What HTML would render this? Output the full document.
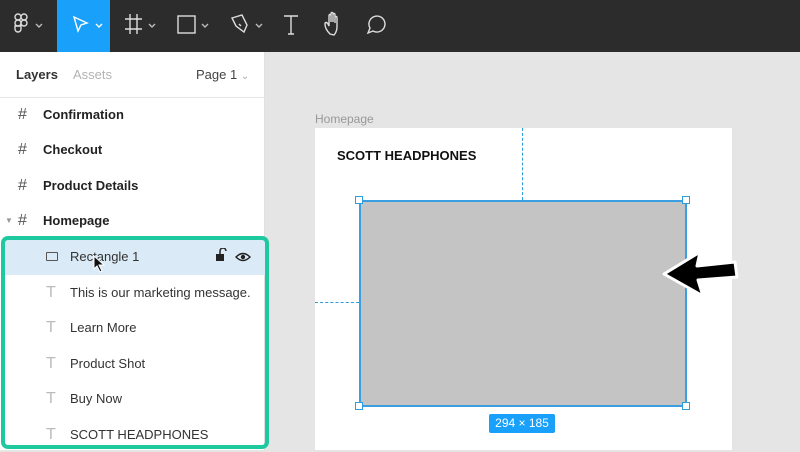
<!DOCTYPE html>
<html><head><style>
*{margin:0;padding:0;box-sizing:border-box}
body{width:800px;height:450px;overflow:hidden;background:#e5e5e5;font-family:"Liberation Sans",sans-serif;position:relative}
.tb{position:absolute;left:0;top:0;width:800px;height:52px;background:#2c2c2c}
.sel{position:absolute;left:57px;top:0;width:53px;height:52px;background:#18a0fb}
.panel{position:absolute;left:0;top:52px;width:265px;height:398px;background:#fff;border-right:1px solid #e0e0e0}
.row{position:absolute;left:0;width:265px;height:35px;font-size:13px;color:#222;line-height:35px}
.row .t{position:absolute;left:70px}
.row.b .t{left:43px;font-weight:bold}
.ti{position:absolute;left:46px;font-size:16px;color:#bbb;font-weight:normal}
svg{position:absolute}
.abs{position:absolute}
</style></head><body>
<div class="tb"></div>
<div class="sel"></div>
<svg width="800" height="52" style="left:0;top:0" fill="none" stroke="#fff" stroke-width="1.4">
<g stroke="#ddd"><rect x="15" y="14" width="6" height="6" rx="3"/><rect x="21" y="14" width="6" height="6" rx="3"/><rect x="15" y="20" width="6" height="6" rx="3"/><circle cx="24" cy="23" r="3"/><path d="M15 26h6v3a3 3 0 0 1-6 0z"/></g>
<path d="M36 24l3 3 3-3" stroke="#bbb"/>
<path d="M74 17l13 6-6 2-3 6z" stroke="#fff"/>
<path d="M96 24l3 3 3-3"/>
<path d="M130 14v20M137 14v20M125 19h17M125 29h17" stroke="#ddd"/>
<path d="M149 24l3 3 3-3" stroke="#bbb"/>
<rect x="178" y="16" width="17" height="17" stroke="#ddd"/>
<path d="M202 24l3 3 3-3" stroke="#bbb"/>
<path d="M232 18l10-3 5 10-3 7-8-6z M239 24l2 2" stroke="#ddd"/>
<path d="M256 24l3 3 3-3" stroke="#bbb"/>
<path d="M284 16h14M291 16v18M288 34h6" stroke="#ddd"/>
<path d="M330 34c-3-3-5-7-5-10 0-2 2-2 3 0l1 2v-10c0-2 2-2 2 0v6-8c0-2 2-2 2 0v8-7c0-2 2-2 2 0v8-5c0-2 2-2 2 0v9c0 4-2 7-3 8z" stroke="#ddd"/>
<path d="M373 31a8 8 0 1 0-3-3l-2 5z" stroke="#ddd"/>
</svg>
<div class="panel">
<div class="abs" style="left:16px;top:15px;font-size:13px;font-weight:bold;color:#333">Layers</div>
<div class="abs" style="left:73px;top:15px;font-size:13px;color:#b3b3b3">Assets</div>
<div class="abs" style="left:196px;top:15px;font-size:13px;color:#444">Page 1 <span style="color:#aaa;font-size:10px">⌄</span></div>
<div class="abs" style="left:0;top:45px;width:265px;height:1px;background:#e6e6e6"></div>
</div>
<div class="abs" style="left:4px;top:239px;width:262px;height:36px;background:#daebf7"></div>
<div class="row b" style="top:97px"><span class="abs" style="left:18px;font-size:16px;color:#555">#</span><span class="t">Confirmation</span></div>
<div class="row b" style="top:132px"><span class="abs" style="left:18px;font-size:16px;color:#555">#</span><span class="t">Checkout</span></div>
<div class="row b" style="top:168px"><span class="abs" style="left:18px;font-size:16px;color:#555">#</span><span class="t">Product Details</span></div>
<div class="row b" style="top:203px"><span class="abs" style="left:5px;font-size:8px;color:#999">▼</span><span class="abs" style="left:18px;font-size:16px;color:#555">#</span><span class="t">Homepage</span></div>
<div class="row" style="top:239px"><span class="abs" style="left:46px;top:13px;width:12px;height:9px;border:1.4px solid #555;border-radius:1px"></span><span class="t" style="color:#333">Rectangle 1</span></div>
<svg width="40" height="20" style="left:214px;top:248px"><rect x="2" y="6" width="8" height="7" fill="#222"/><path d="M6 6V3a3 3 0 0 1 6 0" stroke="#222" stroke-width="1.5" fill="none"/><path d="M22 9q7-7 14 0q-7 7-14 0z" stroke="#222" stroke-width="1.4" fill="none"/><circle cx="29" cy="9" r="2.2" fill="#222"/></svg>
<svg width="14" height="20" style="left:93px;top:255px"><path d="M1 1v13l3-3 3 6 2-1-3-6h5z" fill="#111" stroke="#fff" stroke-width="1"/></svg>
<div class="row" style="top:275px"><span class="ti">T</span><span class="t" style="color:#333">This is our marketing message.</span></div>
<div class="row" style="top:310px"><span class="ti">T</span><span class="t" style="color:#333">Learn More</span></div>
<div class="row" style="top:346px"><span class="ti">T</span><span class="t" style="color:#333">Product Shot</span></div>
<div class="row" style="top:381px"><span class="ti">T</span><span class="t" style="color:#333">Buy Now</span></div>
<div class="row" style="top:417px"><span class="ti">T</span><span class="t" style="color:#333">SCOTT HEADPHONES</span></div>
<div class="abs" style="left:1px;top:236px;width:268px;height:213px;border:4px solid #1ec99f;border-radius:7px"></div>
<div class="abs" style="left:315px;top:112px;font-size:12px;color:#999">Homepage</div>
<div class="abs" style="left:315px;top:128px;width:417px;height:322px;background:#fff"></div>
<div class="abs" style="left:337px;top:148px;font-size:13px;font-weight:bold;color:#111">SCOTT HEADPHONES</div>
<div class="abs" style="left:522px;top:128px;height:72px;border-left:1px dashed #2d9cdb"></div>
<div class="abs" style="left:315px;top:302px;width:44px;border-top:1px dashed #2d9cdb"></div>
<div class="abs" style="left:359px;top:200px;width:328px;height:207px;background:#c4c4c4;border:2px solid #3a9ee0"></div>
<div class="abs" style="left:355px;top:196px;width:8px;height:8px;background:#fff;border:1px solid #2d9cdb"></div>
<div class="abs" style="left:682px;top:196px;width:8px;height:8px;background:#fff;border:1px solid #2d9cdb"></div>
<div class="abs" style="left:355px;top:402px;width:8px;height:8px;background:#fff;border:1px solid #2d9cdb"></div>
<div class="abs" style="left:682px;top:402px;width:8px;height:8px;background:#fff;border:1px solid #2d9cdb"></div>
<div class="abs" style="left:489px;top:414px;width:66px;height:19px;background:#18a0fb;border-radius:2px;color:#fff;font-size:12px;text-align:center;line-height:19px">294 × 185</div>
<svg width="90" height="50" style="left:660px;top:248px"><path d="M4 26L40 4l-3 14 38-4 2 15-39 3 5 16z" fill="#000" stroke="#fff" stroke-width="3" stroke-linejoin="round"/></svg>
</body></html>
